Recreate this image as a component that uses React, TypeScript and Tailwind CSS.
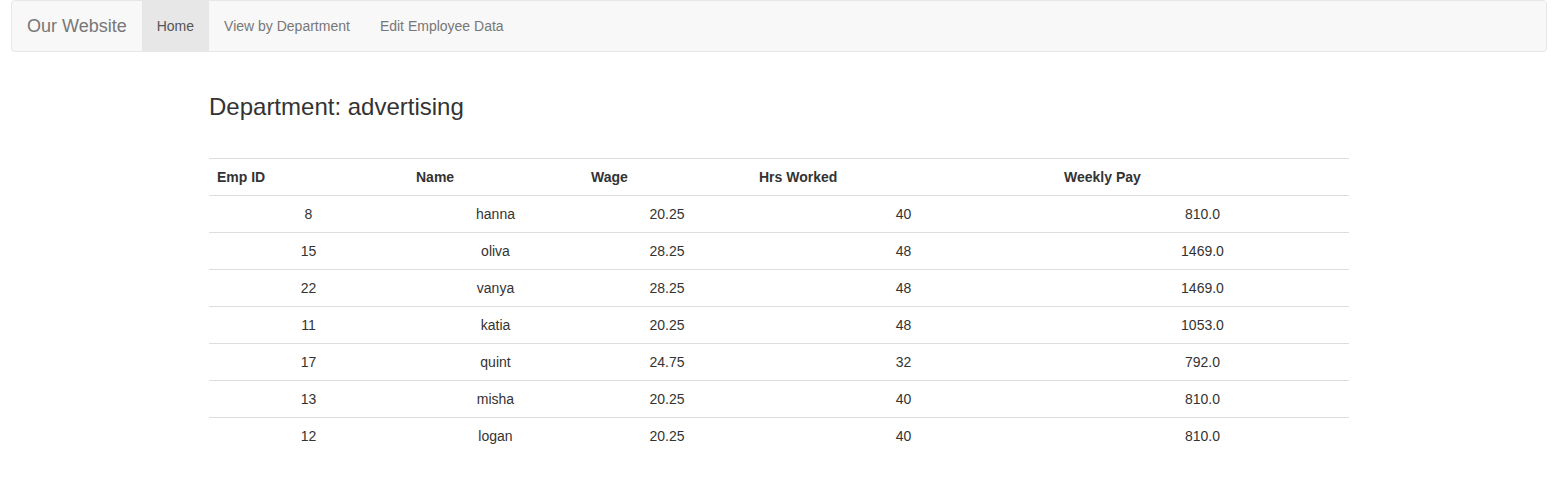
import React from "react";

const rows = [
  ["8", "hanna", "20.25", "40", "810.0"],
  ["15", "oliva", "28.25", "48", "1469.0"],
  ["22", "vanya", "28.25", "48", "1469.0"],
  ["11", "katia", "20.25", "48", "1053.0"],
  ["17", "quint", "24.75", "32", "792.0"],
  ["13", "misha", "20.25", "40", "810.0"],
  ["12", "logan", "20.25", "40", "810.0"],
];

const widths = ["w-[199px]", "w-[175px]", "w-[168px]", "w-[305px]", "w-[293px]"];
const heads = ["Emp ID", "Name", "Wage", "Hrs Worked", "Weekly Pay"];

export default function App() {
  return (
    <div className="min-h-[494px] bg-white text-[14px] leading-5 text-[#333]" style={{ fontFamily: '"Liberation Sans", Arial, sans-serif' }}>
      <nav className="ml-[11px] mr-[6px] flex h-[52px] items-stretch rounded-[4px] border border-[#e7e7e7] bg-[#f8f8f8]">
        <a className="flex items-center px-[15px] text-[18px] text-[#777]">Our Website</a>
        <a className="flex items-center bg-[#e7e7e7] px-[15px] text-[#555]">Home</a>
        <a className="flex items-center px-[15px] text-[#777]">View by Department</a>
        <a className="flex items-center px-[15px] text-[#777]">Edit Employee Data</a>
      </nav>
      <div className="ml-[209px] w-[1140px]">
        <h3 className="mt-[42px] text-[24px] leading-[26px] font-normal text-[#333]">Department: advertising</h3>
        <table className="mt-[38px] w-[1140px] table-fixed border-collapse">
          <thead>
            <tr className="border-t border-[#ddd]">
              {heads.map((h, i) => (
                <th key={h} className={`${widths[i]} px-2 py-2 text-left font-bold`}>{h}</th>
              ))}
            </tr>
          </thead>
          <tbody>
            {rows.map((r) => (
              <tr key={r[0]} className="border-t border-[#ddd]">
                {r.map((c, i) => (
                  <td key={i} className="px-2 py-2 text-center">{c}</td>
                ))}
              </tr>
            ))}
          </tbody>
        </table>
      </div>
    </div>
  );
}
